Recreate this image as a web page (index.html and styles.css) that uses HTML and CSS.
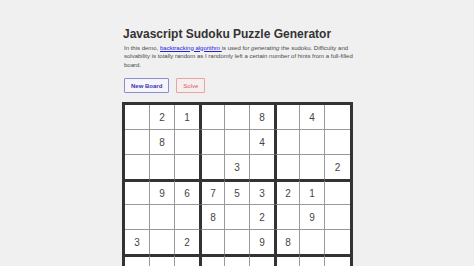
FILE: index.html
```html
<!DOCTYPE html>
<html>
<head>
<meta charset="utf-8">
<title>Javascript Sudoku Puzzle Generator</title>
<link rel="stylesheet" href="styles.css">
</head>
<body>
<div class="container">
  <h1 class="title">Javascript Sudoku Puzzle Generator</h1>
  <p class="intro">In this demo, <a href="#" class="link">backtracking algorithm </a> is used for <em>generating</em> the sudoku. Difficulty and solvability is totally random as I randomly left a certain number of hints from a full-filled board.</p>
  <div class="actions">
    <button class="btn btn-new">New Board</button>
    <button class="btn btn-solve">Solve</button>
  </div>
  <div class="board">
    <div class="cell"></div><div class="cell">2</div><div class="cell">1</div><div class="cell"></div><div class="cell"></div><div class="cell">8</div><div class="cell"></div><div class="cell">4</div><div class="cell"></div>
    <div class="cell"></div><div class="cell">8</div><div class="cell"></div><div class="cell"></div><div class="cell"></div><div class="cell">4</div><div class="cell"></div><div class="cell"></div><div class="cell"></div>
    <div class="cell"></div><div class="cell"></div><div class="cell"></div><div class="cell"></div><div class="cell">3</div><div class="cell"></div><div class="cell"></div><div class="cell"></div><div class="cell">2</div>
    <div class="cell"></div><div class="cell">9</div><div class="cell">6</div><div class="cell">7</div><div class="cell">5</div><div class="cell">3</div><div class="cell">2</div><div class="cell">1</div><div class="cell"></div>
    <div class="cell"></div><div class="cell"></div><div class="cell"></div><div class="cell">8</div><div class="cell"></div><div class="cell">2</div><div class="cell"></div><div class="cell">9</div><div class="cell"></div>
    <div class="cell">3</div><div class="cell"></div><div class="cell">2</div><div class="cell"></div><div class="cell"></div><div class="cell">9</div><div class="cell">8</div><div class="cell"></div><div class="cell"></div>
    <div class="cell"></div><div class="cell"></div><div class="cell"></div><div class="cell"></div><div class="cell"></div><div class="cell"></div><div class="cell"></div><div class="cell"></div><div class="cell"></div>
    <div class="cell">7</div><div class="cell"></div><div class="cell"></div><div class="cell">3</div><div class="cell"></div><div class="cell"></div><div class="cell"></div><div class="cell">2</div><div class="cell"></div>
    <div class="cell"></div><div class="cell"></div><div class="cell">4</div><div class="cell"></div><div class="cell"></div><div class="cell">6</div><div class="cell"></div><div class="cell"></div><div class="cell"></div>
  </div>
</div>
</body>
</html>
```

FILE: styles.css
```css
html, body {
  margin: 0;
  padding: 0;
  background: #f0f0f0;
}

body {
  font-family: "Liberation Sans", Arial, sans-serif;
  color: #444;
}

.container {
  width: 231px;
  margin: 0 auto;
  padding-top: 27px;
  padding-left: 1px;
}

.title {
  margin: 0 0 0 1px;
  font-size: 12px;
  line-height: 14px;
  font-weight: bold;
  color: #333;
}

.intro {
  margin: 2.5px 0 0 2px;
  font-size: 6px;
  line-height: 8.6px;
  color: #4a4a4a;
}

.link {
  color: #2222dd;
  text-decoration: underline;
}

.actions {
  display: flex;
  gap: 7px;
  margin: 9px 0 0 2px;
}

.btn {
  height: 15px;
  padding: 0 6px;
  font-family: "Liberation Sans", Arial, sans-serif;
  font-size: 6px;
  border-radius: 1px;
  cursor: pointer;
}

.btn-new {
  border: 1px solid #8c8cd6;
  background: #f6f6fa;
  color: #3434b4;
  font-weight: bold;
}

.btn-solve {
  border: 1px solid #e2a4a4;
  background: #f6eeee;
  color: #d25a5a;
}

.board {
  margin-top: 9px;
  display: grid;
  grid-template-columns: repeat(9, 25px);
  grid-auto-rows: 25px;
  width: 225px;
  border: 3px solid #333;
  background: #fff;
}

.cell {
  box-sizing: border-box;
  border-right: 1px solid #999;
  border-bottom: 1px solid #999;
  display: flex;
  align-items: center;
  justify-content: center;
  font-size: 10px;
  color: #444;
}

.cell:nth-child(9n) {
  border-right: none;
}

.cell:nth-child(9n+3),
.cell:nth-child(9n+6) {
  border-right-color: #333;
}

.cell:nth-child(9n+4),
.cell:nth-child(9n+7) {
  border-left: 2px solid #333;
}

.cell:nth-child(n+19):nth-child(-n+27),
.cell:nth-child(n+46):nth-child(-n+54) {
  border-bottom-color: #333;
}

.cell:nth-child(n+28):nth-child(-n+36),
.cell:nth-child(n+55):nth-child(-n+63) {
  border-top: 2px solid #333;
}
```
